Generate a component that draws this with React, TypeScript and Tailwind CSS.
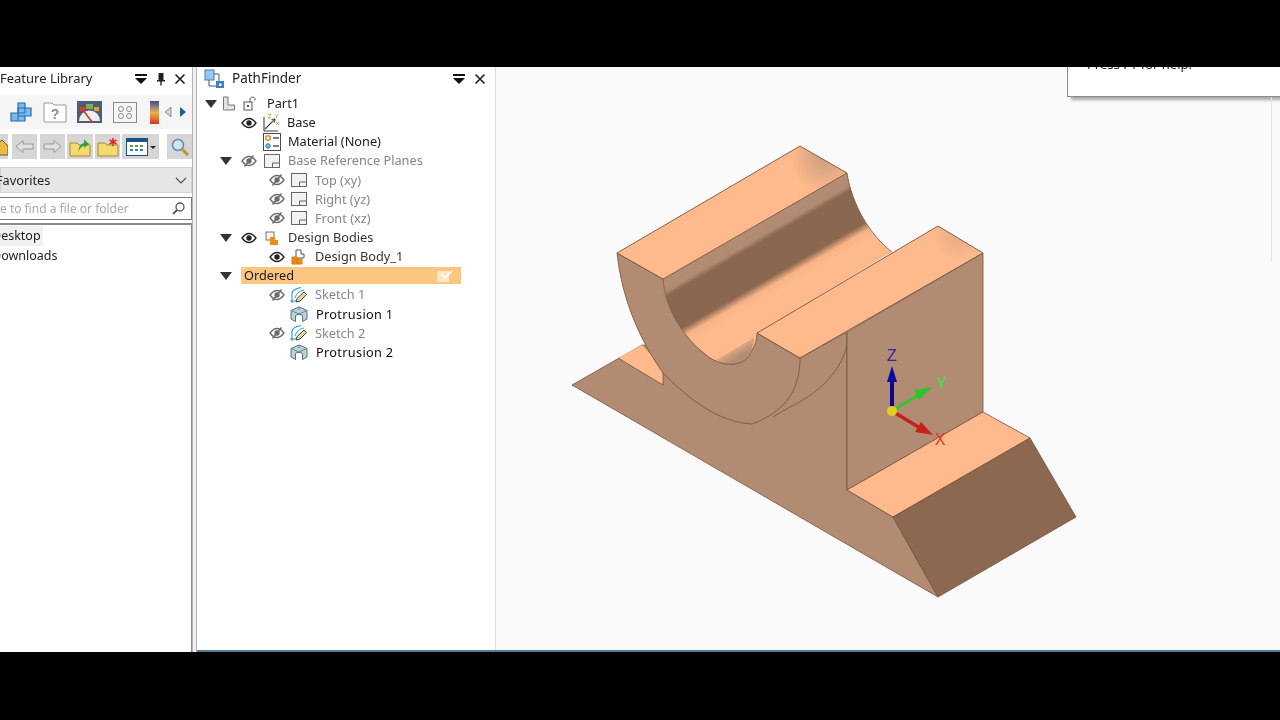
import type { ReactNode } from "react";

const FONT = "font-['Noto_Sans',sans-serif]";

function Eye({ off }: { off?: boolean }) {
  const c = off ? "#6b6b6b" : "#222";
  return (
    <svg width="16" height="12" viewBox="0 0 16 12" className="shrink-0">
      <path d="M1 6C3.5 2.6 5.8 1.5 8 1.5S12.5 2.6 15 6C12.5 9.4 10.2 10.5 8 10.5S3.5 9.4 1 6Z" fill="#fff" stroke={c} strokeWidth="1.3" />
      <circle cx="8" cy="6" r="2.7" fill={c} />
      {off && <path d="M12.5 .5L3.5 11.5" stroke={c} strokeWidth="1.4" />}
    </svg>
  );
}

function Arrow() {
  return (
    <svg width="14" height="10" viewBox="0 0 14 10" className="shrink-0">
      <path d="M1 1H13L7 9Z" fill="#333" />
    </svg>
  );
}

function PlaneIcon() {
  return (
    <svg width="18" height="16" viewBox="0 0 18 16" className="shrink-0">
      <rect x="1.5" y="1.5" width="15" height="13" fill="#f2f2f2" stroke="#666" />
      <path d="M9.5 14.5V10H16.5" fill="none" stroke="#666" />
    </svg>
  );
}

function BaseIcon() {
  return (
    <svg width="18" height="18" viewBox="0 0 18 18" className="shrink-0">
      <path d="M2 17V3M2 17H16" stroke="#444" strokeWidth="1.1" fill="none" />
      <path d="M3 15L13 5" stroke="#444" strokeWidth="1.1" />
      <path d="M13 5L9.5 5.5M13 5L12.5 8.5" stroke="#444" />
      <path d="M6 0.5H9L6 4H9M13 .5L14.5 2.5L16 .5M14.5 2.5V4M14 8L17 11M17 8L14 11" stroke="#d98a3c" strokeWidth=".8" fill="none" />
    </svg>
  );
}

function MaterialIcon() {
  return (
    <svg width="18" height="18" viewBox="0 0 18 18" className="shrink-0">
      <rect x=".5" y=".5" width="17" height="17" fill="#fff" stroke="#4a4a4a" />
      <circle cx="5" cy="5" r="2.3" fill="none" stroke="#e08a3a" strokeWidth="1.5" />
      <circle cx="5" cy="13" r="2.3" fill="#6fb7d6" stroke="#3f87a8" />
      <path d="M10 5H16M10 13H16" stroke="#555" strokeWidth="1.3" />
    </svg>
  );
}

function BodiesIcon({ big }: { big?: boolean }) {
  return (
    <svg width="18" height="16" viewBox="0 0 18 16" className="shrink-0">
      {big ? (
        <>
          <path d="M6 1H11V5H14V9H6Z" fill="#fff" stroke="#555" />
          <path d="M2 8H7V15H2ZM7 10H12V15H7Z" fill="#ef8a1d" stroke="#d87a12" />
        </>
      ) : (
        <>
          <rect x="3" y="2" width="8" height="8" fill="#f3f3f3" stroke="#777" />
          <path d="M7 7H12V10H15V15H7Z" fill="#ef8a1d" />
        </>
      )}
    </svg>
  );
}

function SketchIcon() {
  return (
    <svg width="20" height="18" viewBox="0 0 20 18" className="shrink-0">
      <path d="M1 15H7M3 17V8C3 5 6 2.5 12 1.5" fill="none" stroke="#2b9ac4" strokeWidth="1.1" />
      <path d="M6 12C7 8 10 5 15 4" fill="none" stroke="#2b9ac4" />
      <path d="M7 16L8 12.5L15 6L17.5 8.5L11 15Z" fill="#e9d9a0" stroke="#444" />
    </svg>
  );
}

function ProtrusionIcon() {
  return (
    <svg width="22" height="17" viewBox="0 0 22 17" className="shrink-0">
      <path d="M11 1L19 4.5V13L14.5 15.5V9.5C13 8 9 8 7.5 9.5V15.5L3 13V4.5Z" fill="#b9d3de" stroke="#5d6f78" />
      <path d="M3 4.5L11 8L19 4.5M11 1V4" fill="none" stroke="#5d6f78" strokeWidth=".8" />
    </svg>
  );
}

function PanelHeadIcons({ pin }: { pin?: boolean }) {
  return (
    <div className="flex items-center gap-[8px]">
      <svg width="14" height="12" viewBox="0 0 14 12">
        <path d="M1 1H13V3H1ZM1 5H13L7 11Z" fill="#111" />
      </svg>
      {pin && (
        <svg width="10" height="14" viewBox="0 0 10 14">
          <path d="M2.5 1H7.5V8H9V9.5H5.7V13.5H4.300V9.5H1V8H2.5Z" fill="#222" />
        </svg>
      )}
      <svg width="12" height="12" viewBox="0 0 12 12">
        <path d="M1.5 1.5L10.5 10.500M10.500 1.5L1.5 10.500" stroke="#222" strokeWidth="1.7" />
      </svg>
    </div>
  );
}

function Row({ pad, children }: { pad: string; children: ReactNode }) {
  return <div className={"flex items-center h-[19.15px] whitespace-nowrap text-[12.75px] " + pad}>{children}</div>;
}

function ToolButton({ w, children }: { w: string; children: ReactNode }) {
  return <div className={"h-[25px] bg-[#d6d6d6] flex items-center justify-center shrink-0 " + w}>{children}</div>;
}

function Tree() {
  const eye = (off?: boolean) => <span className="w-[16px] flex justify-center shrink-0"><Eye off={off} /></span>;
  return (
    <div className="pt-[27px] text-[#1c1c1c]">
      <Row pad="pl-[7px]">
        <Arrow />
        <svg width="14" height="15" viewBox="0 0 14 15" className="ml-[4px] shrink-0">
          <path d="M1.5 1H6V9H12.5V14H1.5Z" fill="#e4e4e4" stroke="#777" />
        </svg>
        <svg width="14" height="15" viewBox="0 0 14 15" className="ml-[7px] shrink-0">
          <rect x="1" y="6" width="8" height="8" fill="#fff" stroke="#555" />
          <path d="M7 6V3C7 .5 12 .5 12 3V4.5" fill="none" stroke="#555" />
          <rect x="4" y="9" width="2" height="2" fill="#555" />
        </svg>
        <span className="ml-[10px]">Part1</span>
      </Row>
      <Row pad="pl-[44px]">{eye()}<span className="ml-[5px]"><BaseIcon /></span><span className="ml-[7px]">Base</span></Row>
      <Row pad="pl-[66px]"><MaterialIcon /><span className="ml-[7px]">Material (None)</span></Row>
      <Row pad="pl-[22px] text-[#868686]"><Arrow /><span className="ml-[8px]">{eye(true)}</span><span className="ml-[6px]"><PlaneIcon /></span><span className="ml-[7px]">Base Reference Planes</span></Row>
      <Row pad="pl-[72px] text-[#868686]">{eye(true)}<span className="ml-[5px]"><PlaneIcon /></span><span className="ml-[7px]">Top (xy)</span></Row>
      <Row pad="pl-[72px] text-[#868686]">{eye(true)}<span className="ml-[5px]"><PlaneIcon /></span><span className="ml-[7px]">Right (yz)</span></Row>
      <Row pad="pl-[72px] text-[#868686]">{eye(true)}<span className="ml-[5px]"><PlaneIcon /></span><span className="ml-[7px]">Front (xz)</span></Row>
      <Row pad="pl-[22px] text-[#333]"><Arrow /><span className="ml-[8px]">{eye()}</span><span className="ml-[6px]"><BodiesIcon /></span><span className="ml-[7px]">Design Bodies</span></Row>
      <Row pad="pl-[72px] text-[#333]">{eye()}<span className="ml-[5px]"><BodiesIcon big /></span><span className="ml-[7px]">Design Body_1</span></Row>
      <Row pad="pl-[22px]">
        <Arrow />
        <div className="ml-[8px] w-[220px] h-[17px] bg-[#fbc67f] flex items-center justify-between pl-[3px] pr-[8px]">
          <span>Ordered</span>
          <svg width="16" height="12" viewBox="0 0 16 12">
            <rect x="0" y="1" width="12" height="11" fill="#fde7c6" />
            <path d="M4 4L8 8L15 1" fill="none" stroke="#fff" strokeWidth="1.5" />
          </svg>
        </div>
      </Row>
      <Row pad="pl-[72px] text-[#868686]">{eye(true)}<span className="ml-[4px]"><SketchIcon /></span><span className="ml-[6px]">Sketch 1</span></Row>
      <Row pad="pl-[91px] tracking-[0.3px] text-[#111]"><ProtrusionIcon /><span className="ml-[6px]">Protrusion 1</span></Row>
      <Row pad="pl-[72px] text-[#868686]">{eye(true)}<span className="ml-[4px]"><SketchIcon /></span><span className="ml-[6px]">Sketch 2</span></Row>
      <Row pad="pl-[91px] tracking-[0.3px] text-[#111]"><ProtrusionIcon /><span className="ml-[6px]">Protrusion 2</span></Row>
    </div>
  );
}

function LibraryPanel() {
  return (
    <div className="w-[192px] shrink-0 bg-white overflow-hidden text-[#222]">
      <div className="h-[25px] pb-[2px] flex items-center justify-between pr-[6px] text-[13px]">
        <span>Feature Library</span>
        <PanelHeadIcons pin />
      </div>
      <div className="h-[34px] mt-[3px] bg-[#f5f5f5] flex items-center relative">
        <svg width="24" height="22" viewBox="0 0 24 22" className="ml-[9px] shrink-0">
          <path d="M9 2H16V7H22V15H16V20H2V12H9Z" fill="#7db8e8" stroke="#1f6fb4" strokeWidth="1.2" />
          <path d="M9 7H16V12H9ZM9 12V20M16 15H9" fill="none" stroke="#1f6fb4" />
        </svg>
        <svg width="24" height="22" viewBox="0 0 24 22" className="ml-[10px] shrink-0">
          <path d="M1 21V2H9L11 4H23V21Z" fill="#fff" stroke="#999" />
          <text x="12" y="18" textAnchor="middle" fontSize="14" fontWeight="700" fill="#888" fontFamily="Liberation Sans">?</text>
        </svg>
        <svg width="25" height="22" viewBox="0 0 25 22" className="ml-[10px] shrink-0">
          <rect x="0" y="0" width="25" height="22" fill="#4d5c78" />
          <path d="M2 20A10.500 10.500 0 0 1 23 20Z" fill="#eee" />
          <path d="M3 6H8V10H3Z" fill="#cc4433" />
          <path d="M9 3H16V8H9Z" fill="#7fae55" />
          <path d="M17 6H22V10H17Z" fill="#d9a03f" />
          <path d="M6 9L15 21" stroke="#c23a2e" strokeWidth="1.5" />
        </svg>
        <svg width="24" height="21" viewBox="0 0 24 21" className="ml-[11px] shrink-0">
          <rect x=".5" y=".5" width="23" height="20" fill="#f5f5f5" stroke="#8c8c8c" />
          <circle cx="8" cy="7" r="2.5" fill="none" stroke="#8c8c8c" />
          <circle cx="16" cy="7" r="2.5" fill="none" stroke="#8c8c8c" />
          <circle cx="8" cy="14" r="2.5" fill="none" stroke="#8c8c8c" />
          <circle cx="16" cy="14" r="2.5" fill="none" stroke="#8c8c8c" />
        </svg>
        <div className="ml-[13px] w-[9px] h-[23px] shrink-0 bg-gradient-to-b from-[#3a4c86] via-[#e9b04a] to-[#d0301f]" />
        <svg width="22" height="12" viewBox="0 0 22 12" className="ml-[5px] shrink-0">
          <path d="M7 1V11L1 6Z" fill="#c9d3dc" stroke="#8a97a3" />
          <path d="M16 1V11L22 6Z" fill="#1f5e96" />
        </svg>
      </div>
      <div className="h-[25px] mt-[5px] flex items-center">
        <ToolButton w="w-[8px]">
          <svg width="8" height="20" viewBox="0 0 8 20"><path d="M-6 10L2 3L8 9V18H-3V10Z" fill="#efb942" stroke="#6f5a24" /></svg>
        </ToolButton>
        <div className="ml-[4px]">
          <ToolButton w="w-[25px]">
            <svg width="19" height="15" viewBox="0 0 19 15"><path d="M1 7.500L8 1.500V5H18V10H8V13.500Z" fill="#e0e0e0" stroke="#9a9a9a" /></svg>
          </ToolButton>
        </div>
        <div className="ml-[3px]">
          <ToolButton w="w-[25px]">
            <svg width="19" height="15" viewBox="0 0 19 15"><path d="M18 7.500L11 1.500V5H1V10H11V13.500Z" fill="#e0e0e0" stroke="#9a9a9a" /></svg>
          </ToolButton>
        </div>
        <div className="ml-[2px]">
          <ToolButton w="w-[26px]">
            <svg width="22" height="20" viewBox="0 0 22 20">
              <path d="M1 19V6H8L10 8H21V19Z" fill="#f5d971" stroke="#a98a2a" />
              <path d="M9 15C10 9 12 7 15 6V2.500L20 7L15 11V8.500C13 9 11 11 9 15Z" fill="#2f9e3a" />
            </svg>
          </ToolButton>
        </div>
        <div className="ml-[2px]">
          <ToolButton w="w-[25px]">
            <svg width="22" height="20" viewBox="0 0 22 20">
              <path d="M1 19V6H8L10 8H21V19Z" fill="#f5d971" stroke="#a98a2a" />
              <path d="M16 1V9M12.500 3L19.500 7M19.500 3L12.500 7" stroke="#e0281e" strokeWidth="1.5" />
            </svg>
          </ToolButton>
        </div>
        <div className="ml-[2px]">
          <ToolButton w="w-[37px]">
            <svg width="30" height="18" viewBox="0 0 30 18">
              <rect x=".5" y=".5" width="21" height="17" fill="#fff" stroke="#1f4f8a" />
              <rect x="0" y="0" width="22" height="4" fill="#1f4f8a" />
              <path d="M4 7H7V9H4ZM9 7H12V9H9ZM14 7H17V9H14Z" fill="#5aa04a" />
              <path d="M4 11H7V13H4ZM9 11H12V13H9ZM14 11H17V13H14Z" fill="#3a7ac0" />
              <path d="M24 8H30L27 11Z" fill="#222" />
            </svg>
          </ToolButton>
        </div>
        <div className="ml-[8px]">
          <ToolButton w="w-[25px]">
            <svg width="20" height="20" viewBox="0 0 20 20">
              <circle cx="8" cy="8" r="5.500" fill="#cfe6f7" stroke="#6a8aa5" strokeWidth="1.5" />
              <path d="M12 12L18 18" stroke="#c98f3a" strokeWidth="3" />
            </svg>
          </ToolButton>
        </div>
      </div>
      <div className="h-[26px] mt-[8px] pt-[2px] bg-[#e6e6e6] border border-[#d2d2d2] flex items-center justify-between pr-[4px] text-[12.75px]">
        <span className="-ml-[5px]">Favorites</span>
        <svg width="12" height="8" viewBox="0 0 12 8"><path d="M1 1L6 6L11 1" fill="none" stroke="#555" strokeWidth="1.2" /></svg>
      </div>
      <div className="h-[23px] mt-[4px] border border-[#7a7a7a] border-l-0 flex items-center justify-between pr-[5px] text-[12px] text-[#a8a8a8] bg-white">
        <span className="whitespace-nowrap">e to find a file or folder</span>
        <svg width="15" height="15" viewBox="0 0 15 15">
          <circle cx="9" cy="6" r="4" fill="none" stroke="#555" strokeWidth="1.3" />
          <path d="M6 9L2 13" stroke="#555" strokeWidth="1.8" />
        </svg>
      </div>
      <div className="mt-[3px] h-[430px] border-t-2 border-r border-[#8a8a8a] pt-[1px] text-[12.5px]">
        <div className="w-[43px] h-[20px] bg-[#f1f1f1] flex items-center whitespace-nowrap overflow-hidden">
          <span className="-ml-[8px]">Desktop</span>
        </div>
        <div className="h-[20px] flex items-center whitespace-nowrap">
          <span className="-ml-[8px]">Downloads</span>
        </div>
      </div>
    </div>
  );
}

function Model() {
  const edge = "#76503a";
  return (
    <svg viewBox="496 67 784 583" className="w-full h-full block">
      <defs>
        <linearGradient id="channel" gradientUnits="userSpaceOnUse" x1="663" y1="279" x2="713" y2="365.600">
          <stop offset="0" stopColor="#b28d73" />
          <stop offset=".12" stopColor="#b08b71" />
          <stop offset=".17" stopColor="#8a674f" />
          <stop offset=".52" stopColor="#8a674f" />
          <stop offset=".6" stopColor="#f8b487" />
          <stop offset=".68" stopColor="#feb98c" />
          <stop offset="1" stopColor="#feb98c" />
        </linearGradient>
        <radialGradient id="corner" gradientUnits="userSpaceOnUse" cx="825" cy="158" r="34">
          <stop offset="0" stopColor="#c99e80" />
          <stop offset="1" stopColor="#feb98c" />
        </radialGradient>
        <radialGradient id="corner2" gradientUnits="userSpaceOnUse" cx="958" cy="236" r="24">
          <stop offset="0" stopColor="#e4ab86" />
          <stop offset="1" stopColor="#feb98c" />
        </radialGradient>
        <linearGradient id="notch" gradientUnits="userSpaceOnUse" x1="728" y1="345" x2="742" y2="368">
          <stop offset="0" stopColor="#feb98c" />
          <stop offset=".6" stopColor="#b28d73" />
        </linearGradient>
      </defs>
      {/* base + side */}
      <path d="M572 385L642 345L800 358L847 332V490L893 517L938 597Z" fill="#b18c72" stroke={edge} strokeWidth=".8" strokeLinejoin="round" />
      {/* small step left */}
      <path d="M618 358L642 345L663 368V385Z" fill="#feb98c" />
      <path d="M618 358L663 385V368" fill="none" stroke={edge} strokeWidth=".8" />
      {/* channel */}
      <path d="M663 279L847 173C852 205 870 235 892 252L757 333C757 340 755 345 752 350C745 368 725 367 710 358C685 340 665 310 663 279Z" fill="url(#channel)" />
      <path d="M716 360L745 343L754 338C753 352 745 366 728 366Z" fill="url(#notch)" />
      <path d="M847 173C852 205 870 235 892 252" fill="none" stroke={edge} strokeWidth=".8" />
      {/* crescent */}
      <path d="M617 253L663 279C665 310 685 340 710 358C725 367 745 368 752 350C755 345 757 340 757 333L800 358C800 385 790 410 752 424C718 422 690 400 663 373C640 340 622 300 617 253Z" fill="#b18c72" stroke={edge} strokeWidth=".8" strokeLinejoin="round" />
      <path d="M847 345C840 375 815 395 790 407L773 417" fill="none" stroke={edge} strokeWidth=".8" />
      {/* top blocks */}
      <path d="M617 253L800 146L847 173L663 279Z" fill="url(#corner)" stroke={edge} strokeWidth=".9" strokeLinejoin="round" />
      <path d="M757 333L938 226L983 253L800 358Z" fill="url(#corner2)" stroke={edge} strokeWidth=".9" strokeLinejoin="round" />
      {/* wall */}
      <path d="M847 332L983 253V412L847 490Z" fill="#b18c72" stroke={edge} strokeWidth=".8" strokeLinejoin="round" />
      {/* ramp */}
      <path d="M847 490L983 412L1030 438L893 517Z" fill="#feb98c" stroke={edge} strokeWidth=".8" strokeLinejoin="round" />
      <path d="M893 517L1030 438L1076 517L938 597Z" fill="#8c6851" stroke={edge} strokeWidth=".8" strokeLinejoin="round" />
      {/* triad */}
      <path d="M892 410V378" stroke="#0a0a8c" strokeWidth="4" />
      <path d="M892 366L897 382H887Z" fill="#0a0a9c" />
      <path d="M892 411L925 391" stroke="#35c42c" strokeWidth="3" />
      <path d="M932 387L919 400L914 390Z" fill="#2fc22a" />
      <path d="M892 411L925 431" stroke="#c8201a" strokeWidth="3.5" />
      <path d="M933 435L915 432L921 422Z" fill="#c8201a" />
      <circle cx="892" cy="411" r="5" fill="#dcd21e" />
      <text x="892" y="361" textAnchor="middle" fontSize="16" fill="#3a22a8" fontFamily="Liberation Sans">Z</text>
      <text x="941" y="389" textAnchor="middle" fontSize="16" fontWeight="700" fill="#5fd05a" fontFamily="Liberation Sans">Y</text>
      <text x="940" y="445" textAnchor="middle" fontSize="16" fill="#e2322a" fontFamily="Liberation Sans">X</text>
    </svg>
  );
}

export default function App() {
  return (
    <div className={"w-[1280px] h-[720px] bg-black flex flex-col overflow-hidden blur-[0.35px] " + FONT}>
      <div className="h-[67px] shrink-0" />
      <div className="h-[585px] flex shrink-0">
        <LibraryPanel />
        <div className="w-[5px] shrink-0 bg-[#f0f0f0] border-l border-r border-[#b4b4b4]" />
        <div className="flex-1 flex flex-col min-w-0">
          <div className="flex-1 flex min-h-0">
            <div className="w-[299px] shrink-0 bg-white border-r border-[#dcdcdc] relative">
              <div className="h-[25px] pb-[2px] absolute top-0 left-0 right-0 flex items-center justify-between pl-[7px] pr-[9px] text-[#222] text-[13.5px]">
                <div className="flex items-center gap-[6px]">
                  <svg width="22" height="20" viewBox="0 0 22 20">
                    <rect x="1" y="1" width="9" height="10" fill="#9cc6ee" stroke="#3b7fc0" />
                    <path d="M5 11V17H12M10 5H15V12" fill="none" stroke="#555" />
                    <rect x="12" y="12" width="8" height="7" fill="#3b7fc0" />
                    <rect x="15" y="14.500" width="2.500" height="2.500" fill="#fff" />
                  </svg>
                  <span>PathFinder</span>
                </div>
                <PanelHeadIcons />
              </div>
              <Tree />
            </div>
            <div className="flex-1 bg-[#fafafa] relative min-w-0">
              <Model />
              <div className="absolute top-0 left-[571px] w-[213px] h-[30px] bg-white border-l border-b border-[#8a8a8a] shadow-[4px_3px_3px_rgba(90,90,90,0.5)] overflow-hidden">
                <div className="-mt-[12px] ml-[19px] text-[13px] text-[#222] whitespace-nowrap">Press F1 for help.</div>
              </div>
              <div className="absolute top-[30px] left-[775px] w-px h-[165px] bg-[#e2e2e2]" />
            </div>
          </div>
          <div className="h-[2px] shrink-0 bg-[#4f7f93]" />
        </div>
      </div>
      <div className="flex-1" />
    </div>
  );
}
